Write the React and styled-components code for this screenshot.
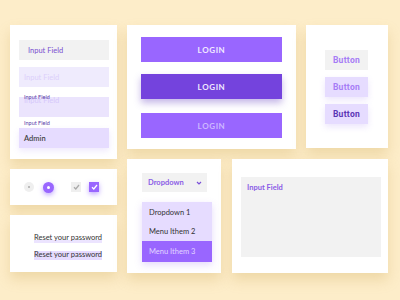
import React from "react";
import styled, { createGlobalStyle } from "styled-components";

const GlobalStyle = createGlobalStyle`
  html, body {
    margin: 0;
    padding: 0;
    background: #fdedc9;
    width: 400px;
    height: 300px;
    overflow: hidden;
  }
  body {
    font-family: Lato, "Open Sans", sans-serif;
  }
`;

const Page = styled.div`
  display: flex;
  gap: 10px;
  padding: 25px 0 0 10px;
`;

const Column = styled.div`
  display: flex;
  flex-direction: column;
  gap: ${(p) => p.gap || 10}px;
`;

const Row = styled.div`
  display: flex;
  gap: ${(p) => p.gap || 10}px;
`;

const Card = styled.div`
  background: #fff;
  width: ${(p) => p.w}px;
  height: ${(p) => p.h}px;
  box-sizing: border-box;
  box-shadow: 0 7px 12px rgba(200, 160, 80, 0.28);
  padding: ${(p) => p.pad || "0"};
  display: flex;
  flex-direction: column;
`;

/* inputs card */
const Input = styled.div`
  height: 20px;
  width: 90px;
  background: ${(p) => p.bg};
  color: ${(p) => p.color};
  font-size: 7.5px;
  font-weight: ${(p) => (p.bold ? 600 : 400)};
  display: flex;
  align-items: ${(p) => (p.top ? "flex-start" : "center")};
  padding-left: ${(p) => p.indent || 5}px;
  box-sizing: border-box;
  line-height: ${(p) => (p.top ? "7px" : "normal")};
  box-shadow: ${(p) => (p.shadow ? "0 3px 6px rgba(150, 110, 240, 0.15)" : "none")};
`;

const FieldLabel = styled.div`
  font-size: 5.5px;
  color: #5a3aa8;
  padding-left: 5px;
  line-height: 6px;
  position: relative;
  z-index: 1;
  margin-bottom: ${(p) => p.mb}px;
`;

/* login buttons */
const LoginButton = styled.div`
  width: 141px;
  height: 25px;
  background: ${(p) => p.bg};
  color: ${(p) => p.color};
  font-size: 8px;
  font-weight: 700;
  letter-spacing: 0.6px;
  display: flex;
  align-items: center;
  justify-content: center;
  box-shadow: ${(p) => (p.shadow ? "0 4px 7px rgba(90, 50, 190, 0.35)" : "none")};
`;

/* small buttons */
const SmallButton = styled.div`
  width: 43px;
  height: 20px;
  background: ${(p) => p.bg};
  color: ${(p) => p.color};
  font-family: Roboto, sans-serif;
  font-size: 8.5px;
  font-weight: 700;
  letter-spacing: 0.3px;
  display: flex;
  align-items: center;
  justify-content: center;
  box-shadow: ${(p) => (p.shadow ? "0 3px 6px rgba(150, 110, 240, 0.18)" : "none")};
`;

/* radios and checks */
const Controls = styled.div`
  display: flex;
  align-items: center;
  height: 100%;
  padding-left: 14px;
`;

const Radio = styled.div`
  width: ${(p) => p.size}px;
  height: ${(p) => p.size}px;
  border-radius: 50%;
  background: ${(p) => (p.on ? "#9966ff" : "#efefef")};
  display: flex;
  align-items: center;
  justify-content: center;
  margin-right: ${(p) => p.mr}px;
  box-shadow: ${(p) => (p.on ? "0 2px 5px rgba(130, 80, 255, 0.5)" : "none")};

  &::after {
    content: "";
    width: ${(p) => (p.on ? 3 : 2)}px;
    height: ${(p) => (p.on ? 3 : 2)}px;
    border-radius: 50%;
    background: ${(p) => (p.on ? "#fff" : "#aaa")};
  }
`;

const Check = styled.div`
  width: 10px;
  height: 10px;
  background: ${(p) => (p.on ? "#9966ff" : "#efefef")};
  display: flex;
  align-items: center;
  justify-content: center;
  margin-right: ${(p) => p.mr}px;
  box-shadow: ${(p) => (p.on ? "0 2px 5px rgba(130, 80, 255, 0.5)" : "none")};
`;

/* reset links */
const LinkWrap = styled.div`
  display: flex;
  flex-direction: column;
  align-items: flex-start;
  padding: 17px 0 0 24px;
  gap: 6px;
`;

const ResetLink = styled.span`
  font-size: 7.5px;
  color: #333;
  line-height: 11px;
  background: ${(p) =>
    p.active
      ? "linear-gradient(#fff 0, #fff 20%, #e6dcff 20%)"
      : "linear-gradient(#fff 0, #fff 75%, #ece4ff 75%)"};
`;

/* dropdown */
const Select = styled.div`
  width: 65px;
  height: 19px;
  background: #f2f2f2;
  color: #8a5ce6;
  font-size: 7.5px;
  font-weight: 700;
  display: flex;
  align-items: center;
  justify-content: space-between;
  padding: 0 5px 0 6px;
  box-sizing: border-box;
`;

const Menu = styled.div`
  width: 70px;
  margin-top: 10px;
  background: #e6dcff;
  box-shadow: 0 3px 7px rgba(150, 110, 240, 0.25);
  display: flex;
  flex-direction: column;
`;

const MenuItem = styled.div`
  height: ${(p) => p.h}px;
  display: flex;
  align-items: center;
  padding-left: 7px;
  font-size: 7.5px;
  color: ${(p) => (p.active ? "#e2d6ff" : "#333")};
  background: ${(p) => (p.active ? "#9966ff" : "transparent")};
`;

/* textarea */
const TextArea = styled.div`
  width: 140px;
  height: 80px;
  background: #f2f2f2;
  color: #8a5ce6;
  font-size: 7.5px;
  font-weight: 700;
  padding: 6px 6px;
  box-sizing: border-box;
`;

const Chevron = () => (
  <svg width="6" height="4" viewBox="0 0 6 4">
    <path d="M1 1 L3 3 L5 1" stroke="#7a4fd8" strokeWidth="1.2" fill="none" />
  </svg>
);

const Tick = ({ color }) => (
  <svg width="7" height="6" viewBox="0 0 7 6">
    <path d="M1 3.2 L2.8 5 L6 1" stroke={color} strokeWidth="1.3" fill="none" />
  </svg>
);

const App = () => {
  return (
    <>
      <GlobalStyle />
      <Page>
        <Column>
          <Card w={107} h={134} pad="15px 0 0 9px">
            <Input bg="#f2f2f2" color="#7a4fd0" indent={9}>
              Input Field
            </Input>
            <Input bg="#efebfd" color="#dcd0fb" style={{ marginTop: 7 }}>
              Input Field
            </Input>
            <FieldLabel mb={-3} style={{ marginTop: 7 }}>
              Input Field
            </FieldLabel>
            <Input bg="#ebe4fd" color="#d6c8fb" top>
              Input Field
            </Input>
            <FieldLabel mb={2} style={{ marginTop: 3 }}>
              Input Field
            </FieldLabel>
            <Input bg="#e6dcff" color="#444" bold shadow>
              Admin
            </Input>
          </Card>
          <Card w={107} h={36}>
            <Controls>
              <Radio size={10} mr={9} />
              <Radio size={11} mr={17} on />
              <Check mr={8}>
                <Tick color="#aaa" />
              </Check>
              <Check on>
                <Tick color="#fff" />
              </Check>
            </Controls>
          </Card>
          <Card w={107} h={57}>
            <LinkWrap>
              <ResetLink>Reset your password</ResetLink>
              <ResetLink active>Reset your password</ResetLink>
            </LinkWrap>
          </Card>
        </Column>
        <Column>
          <Row>
            <Card w={169} h={124} pad="12px 0 0 14px">
              <LoginButton bg="#9966ff" color="#f1eaff">
                LOGIN
              </LoginButton>
              <LoginButton bg="#7443dd" color="#f1eaff" shadow style={{ marginTop: 12 }}>
                LOGIN
              </LoginButton>
              <LoginButton bg="#9966ff" color="#cdb8ff" style={{ marginTop: 14 }}>
                LOGIN
              </LoginButton>
            </Card>
            <Card w={82} h={123} pad="25px 0 0 19px">
              <SmallButton bg="#f2f2f2" color="#a67cf6">
                Button
              </SmallButton>
              <SmallButton bg="#e6dcff" color="#a67cf6" shadow style={{ marginTop: 7 }}>
                Button
              </SmallButton>
              <SmallButton bg="#e6dcff" color="#5b34b5" shadow style={{ marginTop: 7 }}>
                Button
              </SmallButton>
            </Card>
          </Row>
          <Row gap={11}>
            <Card w={94} h={114} pad="14px 0 0 15px">
              <Select>
                Dropdown
                <Chevron />
              </Select>
              <Menu>
                <MenuItem h={20}>Dropdown 1</MenuItem>
                <MenuItem h={19}>Menu Ithem 2</MenuItem>
                <MenuItem h={21} active>
                  Menu Ithem 3
                </MenuItem>
              </Menu>
            </Card>
            <Card w={156} h={114} pad="18px 0 0 9px">
              <TextArea>Input Field</TextArea>
            </Card>
          </Row>
        </Column>
      </Page>
    </>
  );
};

export default App;
